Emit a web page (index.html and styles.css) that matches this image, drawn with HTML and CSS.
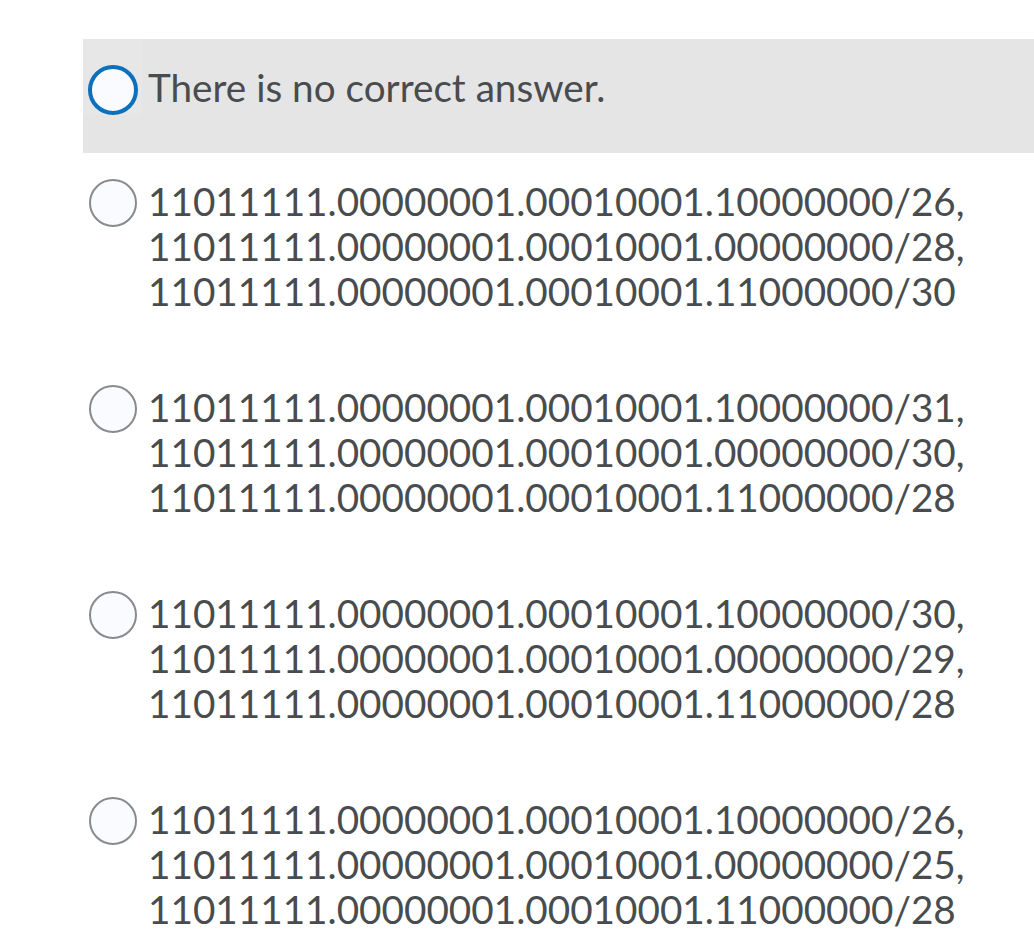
FILE: index.html
```html
<!DOCTYPE html>
<html lang="en">
<head>
<meta charset="utf-8">
<title>Question options</title>
<link rel="stylesheet" href="styles.css">
</head>
<body>
<div class="options">
  <label class="option option-selected">
    <span class="radio-cell"><span class="radio radio-focus"></span></span>
    <span class="option-text">There is no correct answer.</span>
  </label>
  <label class="option">
    <span class="radio-cell"><span class="radio"></span></span>
    <span class="option-text">11011111.00000001.00010001.10000000/26,<br>11011111.00000001.00010001.00000000/28,<br>11011111.00000001.00010001.11000000/30</span>
  </label>
  <label class="option">
    <span class="radio-cell"><span class="radio"></span></span>
    <span class="option-text">11011111.00000001.00010001.10000000/31,<br>11011111.00000001.00010001.00000000/30,<br>11011111.00000001.00010001.11000000/28</span>
  </label>
  <label class="option">
    <span class="radio-cell"><span class="radio"></span></span>
    <span class="option-text">11011111.00000001.00010001.10000000/30,<br>11011111.00000001.00010001.00000000/29,<br>11011111.00000001.00010001.11000000/28</span>
  </label>
  <label class="option">
    <span class="radio-cell"><span class="radio"></span></span>
    <span class="option-text">11011111.00000001.00010001.10000000/26,<br>11011111.00000001.00010001.00000000/25,<br>11011111.00000001.00010001.11000000/28</span>
  </label>
</div>
</body>
</html>
```

FILE: styles.css
```css
html, body {
  margin: 0;
  padding: 0;
  background: #ffffff;
}

body {
  font-family: Lato, "Open Sans", "Liberation Sans", sans-serif;
  color: #494c4e;
  overflow: hidden;
}

.options {
  display: flex;
  flex-direction: column;
  padding: 39px 0 0 83px;
}

.option {
  display: flex;
  align-items: stretch;
  padding-bottom: 45px;
}

.option-selected {
  background: #e5e5e5;
  padding-bottom: 38px;
}

.radio-cell {
  width: 59px;
  flex: none;
  display: flex;
  justify-content: center;
  align-items: flex-start;
  padding-top: 26px;
}

.option-selected .radio-cell {
  background: #e7e7e7;
}

.radio {
  box-sizing: border-box;
  width: 48px;
  height: 48px;
  border-radius: 50%;
  border: 2px solid #888b8e;
  background: #f9fbff;
}

.radio-focus {
  border: 4px solid #0c70bd;
  width: 50px;
  height: 50px;
}

.option-text {
  padding: 26px 0 0 6px;
  font-size: 38.7px;
  line-height: 45px;
  white-space: nowrap;
}
```
